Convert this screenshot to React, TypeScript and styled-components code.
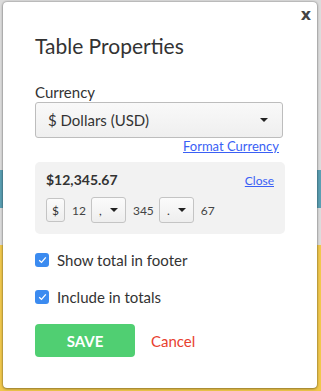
import React, { useState } from 'react';
import styled, { createGlobalStyle } from 'styled-components';

const GlobalStyle = createGlobalStyle`
  html, body {
    margin: 0;
    padding: 0;
  }
  body {
    font-family: Lato, "Open Sans", Arial, sans-serif;
    color: #333;
  }
`;

// Page behind the modal
const Backdrop = styled.div`
  position: relative;
  width: 321px;
  height: 391px;
  overflow: hidden;
  display: flex;
  flex-direction: column;
  background: #dcdcdc;
`;

const Band = styled.div<{ $color: string; $height: number }>`
  flex: 0 0 ${p => p.$height}px;
  background: ${p => p.$color};
`;

const Modal = styled.div`
  position: absolute;
  left: 3px;
  top: 2px;
  width: 314px;
  height: 386px;
  box-sizing: border-box;
  background: #fff;
  border-radius: 4px;
  box-shadow: 0 0 2px rgba(0, 0, 0, 0.45), 0 1px 3px rgba(0, 0, 0, 0.3);
  padding: 33px 32px 0 32px;
  display: flex;
  flex-direction: column;
`;

const CloseX = styled.button`
  position: absolute;
  top: 3px;
  right: 6px;
  border: none;
  background: none;
  padding: 0;
  font-family: "DejaVu Sans", Arial, sans-serif;
  font-weight: bold;
  font-size: 16px;
  color: #444;
  cursor: pointer;
`;

const Title = styled.h2`
  margin: 0;
  font-size: 21px;
  font-weight: 400;
  color: #333;
  line-height: 22px;
`;

const Label = styled.div`
  margin-top: 26px;
  font-size: 15px;
  line-height: 18px;
  color: #333;
`;

const Select = styled.div`
  margin-top: 1px;
  height: 36px;
  box-sizing: border-box;
  width: 248px;
  border: 1px solid #bdbdbd;
  border-radius: 3px;
  background: linear-gradient(#f9f9f9, #efefef);
  display: flex;
  align-items: center;
  justify-content: space-between;
  padding: 0 14px 0 12px;
  font-size: 15px;
  color: #333;
`;

const Caret = styled.span<{ $size?: number }>`
  width: 0;
  height: 0;
  border-left: ${p => p.$size ?? 4}px solid transparent;
  border-right: ${p => p.$size ?? 4}px solid transparent;
  border-top: ${p => p.$size ?? 4}px solid #222;
`;

const LinkRow = styled.div`
  display: flex;
  justify-content: flex-end;
  width: 244px;
  margin-top: 1px;
`;

const Link = styled.a<{ $size?: number }>`
  font-size: ${p => p.$size ?? 13}px;
  color: #3a5ff5;
  text-decoration: underline;
  cursor: pointer;
  line-height: 15px;
`;

const FormatBox = styled.div`
  margin-top: 8px;
  width: 250px;
  height: 72px;
  box-sizing: border-box;
  background: #f2f2f2;
  border-radius: 5px;
  padding: 9px 11px 0 11px;
  display: flex;
  flex-direction: column;
`;

const BoxHeader = styled.div`
  display: flex;
  justify-content: space-between;
  align-items: baseline;
`;

const Amount = styled.div`
  font-size: 14px;
  font-weight: 700;
  color: #333;
`;

const ControlRow = styled.div`
  margin-top: 9px;
  display: flex;
  align-items: center;
  gap: 5px;
  font-size: 12px;
  color: #444;
`;

const SymbolBox = styled.div`
  width: 19px;
  height: 24px;
  box-sizing: border-box;
  border: 1px solid #c4c4c4;
  border-radius: 3px;
  background: linear-gradient(#fbfbfb, #eeeeee);
  display: flex;
  align-items: center;
  justify-content: center;
  font-size: 12px;
  color: #333;
  margin-right: 2px;
`;

const MiniSelect = styled.div`
  width: 35px;
  height: 26px;
  box-sizing: border-box;
  border: 1px solid #c4c4c4;
  border-radius: 3px;
  background: linear-gradient(#fbfbfb, #eeeeee);
  display: flex;
  align-items: center;
  justify-content: center;
  gap: 8px;
  font-size: 12px;
  color: #333;
  margin-right: 2px;
`;

const CheckRow = styled.label<{ $top: number }>`
  margin-top: ${p => p.$top}px;
  display: flex;
  align-items: center;
  gap: 8px;
  font-size: 15px;
  color: #333;
  cursor: pointer;
`;

const Box = styled.span<{ $on: boolean }>`
  width: 14px;
  height: 14px;
  border-radius: 3px;
  background: ${p => (p.$on ? '#3b8bf0' : '#fff')};
  border: ${p => (p.$on ? 'none' : '1px solid #aaa')};
  display: flex;
  align-items: center;
  justify-content: center;
`;

const Actions = styled.div`
  margin-top: 18px;
  display: flex;
  align-items: center;
  gap: 16px;
`;

const SaveButton = styled.button`
  width: 100px;
  height: 33px;
  border: none;
  border-radius: 4px;
  background: #50cf72;
  color: #fff;
  font-family: inherit;
  font-size: 15px;
  font-weight: 700;
  cursor: pointer;
`;

const CancelLink = styled.a`
  color: #e8412f;
  font-size: 15px;
  cursor: pointer;
`;

const Check = ({ on }: { on: boolean }) => (
  <Box $on={on}>
    {on && (
      <svg width="9" height="8" viewBox="0 0 9 8">
        <path d="M1.2 4.2 L3.5 6.4 L7.8 1.3" fill="none" stroke="#fff" strokeWidth="1.3" />
      </svg>
    )}
  </Box>
);

export default function App() {
  const [footer, setFooter] = useState(true);
  const [totals, setTotals] = useState(true);

  return (
    <>
      <GlobalStyle />
      <Backdrop>
        <Band $color="#dcdcdc" $height={170} />
        <Band $color="#5b9fb3" $height={38} />
        <Band $color="#dcdcdc" $height={37} />
        <Band $color="#f1c84c" $height={146} />

        <Modal>
          <CloseX>x</CloseX>
          <Title>Table Properties</Title>

          <Label>Currency</Label>
          <Select>
            <span>$ Dollars (USD)</span>
            <Caret />
          </Select>
          <LinkRow>
            <Link>Format Currency</Link>
          </LinkRow>

          <FormatBox>
            <BoxHeader>
              <Amount>$12,345.67</Amount>
              <Link $size={12}>Close</Link>
            </BoxHeader>
            <ControlRow>
              <SymbolBox>$</SymbolBox>
              <span>12</span>
              <MiniSelect>
                <span>,</span>
                <Caret />
              </MiniSelect>
              <span>345</span>
              <MiniSelect>
                <span>.</span>
                <Caret />
              </MiniSelect>
              <span>67</span>
            </ControlRow>
          </FormatBox>

          <CheckRow $top={17} onClick={() => setFooter(!footer)}>
            <Check on={footer} />
            Show total in footer
          </CheckRow>
          <CheckRow $top={19} onClick={() => setTotals(!totals)}>
            <Check on={totals} />
            Include in totals
          </CheckRow>

          <Actions>
            <SaveButton>SAVE</SaveButton>
            <CancelLink>Cancel</CancelLink>
          </Actions>
        </Modal>
      </Backdrop>
    </>
  );
}
